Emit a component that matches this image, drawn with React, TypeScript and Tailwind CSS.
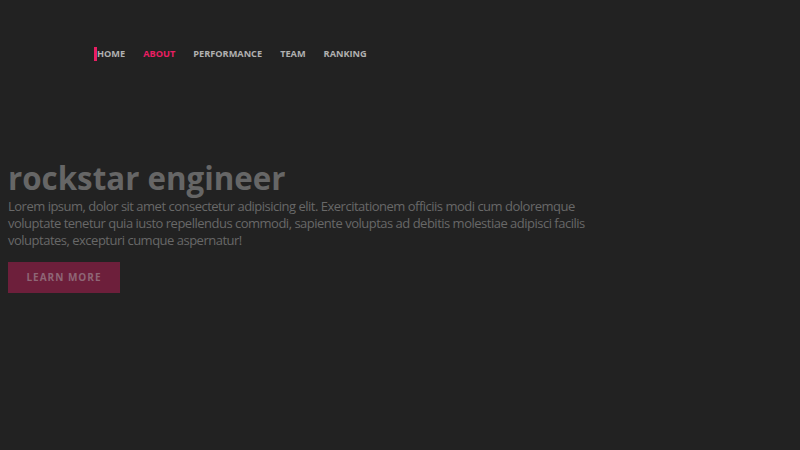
export default function App() {
  const links = ["HOME", "ABOUT", "PERFORMANCE", "TEAM", "RANKING"];
  return (
    <div
      className="w-[800px] h-[450px] bg-[#222222] overflow-hidden"
      style={{ fontFamily: '"Open Sans", sans-serif' }}
    >
      <nav className="pt-[47px] pl-[94px] flex items-center h-[61px]">
        <span className="w-[3px] h-[14px] bg-[#e91e63]" />
        <ul className="flex gap-[18px] text-[9.2px] font-bold leading-[14px]">
          {links.map((l) => (
            <li key={l} className={l === "ABOUT" ? "text-[#e91e63]" : "text-[#b0b0b0]"}>
              {l}
            </li>
          ))}
        </ul>
      </nav>
      <section className="pl-[8px] pt-[97px]">
        <h1 className="text-[31.3px] font-bold leading-[40px] text-[#666666]">rockstar engineer</h1>
        <p className="w-[600px] text-[13px] tracking-[-0.5px] leading-[17px] text-[#686868]">
          Lorem ipsum, dolor sit amet consectetur adipisicing elit. Exercitationem officiis modi cum doloremque
          voluptate tenetur quia iusto repellendus commodi, sapiente voluptas ad debitis molestiae adipisci facilis
          voluptates, excepturi cumque aspernatur!
        </p>
        <button className="mt-[13px] w-[112px] h-[31px] bg-[#6d1f3b] text-[#8e6676] text-[10px] font-bold tracking-[1px]">
          LEARN MORE
        </button>
      </section>
    </div>
  );
}
